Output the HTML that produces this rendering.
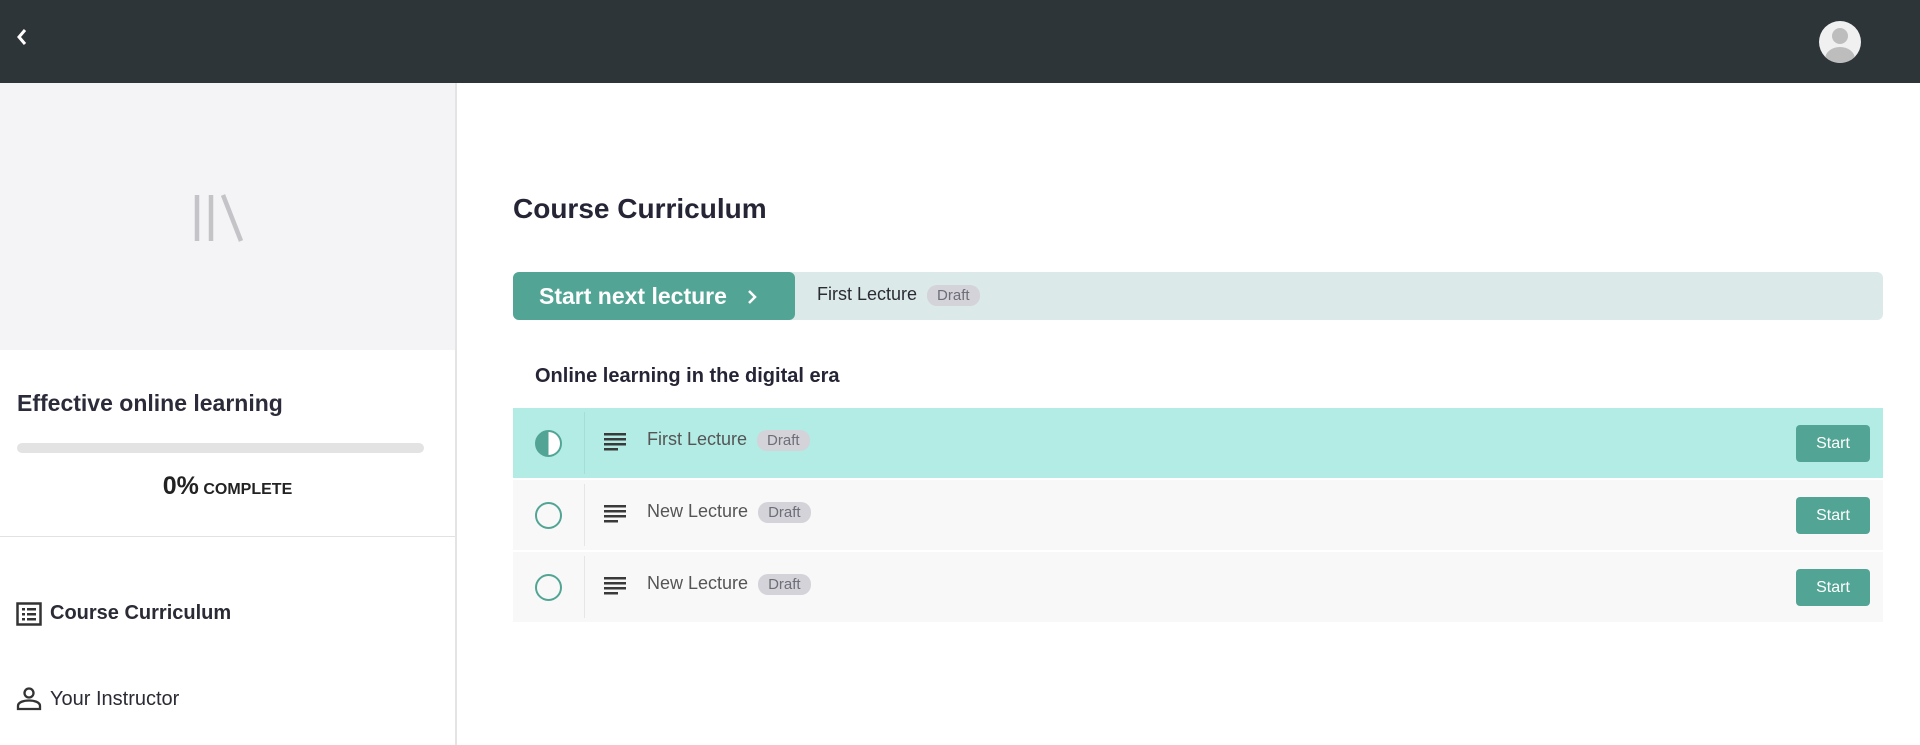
<!DOCTYPE html>
<html><head><style>
*{margin:0;padding:0;box-sizing:border-box}
body{width:1920px;height:745px;overflow:hidden;background:#fff;font-family:"Liberation Sans",sans-serif;position:relative;color:#2b2b35}
.hdr{position:absolute;left:0;top:0;width:1920px;height:83px;background:#2d3538}
.side{position:absolute;left:0;top:83px;width:457px;height:662px;border-right:2px solid #e4e4e4;background:#fff}
.img{position:absolute;left:0;top:0;width:455px;height:267px;background:#f4f4f6}
.abs{position:absolute}
.badge{display:inline-block;background:#d3d3d9;color:#6e6e78;border-radius:10px;font-size:15px;padding:2px 10px;margin-left:10px;vertical-align:0px}
.row{position:absolute;left:513px;width:1370px;height:70px;background:#f8f8f8}
.row .c{position:absolute;left:22px;top:22px;width:27px;height:27px;border:2.5px solid #52a595;border-radius:50%}
.row .v{position:absolute;left:71px;top:4px;width:1px;height:62px;background:#e6e6e6}
.row .t{position:absolute;left:134px;top:21px;font-size:18px;color:#555}
.row .b{position:absolute;left:1283px;top:17px;width:74px;height:37px;background:#52a595;color:#fff;border-radius:4px;font-size:16px;text-align:center;line-height:37px}
.row svg{position:absolute;left:91px;top:25px}
</style></head><body>
<div class="hdr">
<svg class="abs" style="left:13px;top:27px" width="18" height="20" viewBox="0 0 18 20"><path d="M12 3 L6 10 L12 17" stroke="#fff" stroke-width="3" fill="none"/></svg>
<div class="abs" style="left:1819px;top:21px;width:42px;height:42px;border-radius:50%;background:#f0f0f0;overflow:hidden">
<div class="abs" style="left:13px;top:7px;width:16px;height:16px;border-radius:50%;background:#bdbdbd"></div>
<div class="abs" style="left:6px;top:26px;width:30px;height:24px;border-radius:50%;background:#bdbdbd"></div></div>
</div>
<div class="side">
<div class="img">
<svg class="abs" style="left:194px;top:110px" width="52" height="50" viewBox="0 0 52 50"><g stroke="#c4c4c8" stroke-width="4.5"><path d="M3 2V48M17 2V48M29 2L47 48"/></g></svg>
</div>
<div class="abs" style="left:17px;top:307px;font-size:23px;font-weight:bold;color:#2b2b3a">Effective online learning</div>
<div class="abs" style="left:17px;top:360px;width:407px;height:10px;border-radius:5px;background:#e3e3e3"></div>
<div class="abs" style="left:0;top:389px;width:455px;text-align:center;color:#222"><span style="font-size:25px;font-weight:bold">0%</span> <span style="font-size:16px;font-weight:bold">COMPLETE</span></div>
<div class="abs" style="left:0;top:453px;width:455px;height:1px;background:#e2e2e2"></div>
<svg class="abs" style="left:16px;top:519px" width="26" height="24" viewBox="0 0 26 24"><rect x="1.5" y="1.5" width="23" height="21" fill="none" stroke="#333" stroke-width="2.5"/><g fill="#333"><rect x="6" y="6" width="3" height="2.5"/><rect x="6" y="11" width="3" height="2.5"/><rect x="6" y="16" width="3" height="2.5"/><rect x="11" y="6" width="9" height="2.5"/><rect x="11" y="11" width="9" height="2.5"/><rect x="11" y="16" width="9" height="2.5"/></g></svg>
<div class="abs" style="left:50px;top:519px;font-size:20px;font-weight:bold;color:#2b2b35">Course Curriculum</div>
<svg class="abs" style="left:16px;top:604px" width="26" height="24" viewBox="0 0 26 24"><circle cx="13" cy="6" r="4.5" fill="none" stroke="#333" stroke-width="2.3"/><path d="M2 22V19C2 15 8 13.5 13 13.5S24 15 24 19V22Z" fill="none" stroke="#333" stroke-width="2.3"/></svg>
<div class="abs" style="left:50px;top:605px;font-size:20px;color:#2b2b35">Your Instructor</div>
</div>
<div class="abs" style="left:513px;top:193px;font-size:28px;font-weight:bold;color:#252536">Course Curriculum</div>
<div class="abs" style="left:513px;top:272px;width:1370px;height:48px;background:#dce9e9;border-radius:6px"></div>
<div class="abs" style="left:513px;top:272px;width:282px;height:48px;background:#52a595;border-radius:6px;color:#fff;font-size:23px;font-weight:bold;line-height:48px;padding-left:26px">Start next lecture</div>
<svg class="abs" style="left:745px;top:288px" width="14" height="18" viewBox="0 0 14 18"><path d="M4 3L10 9L4 15" stroke="#fff" stroke-width="2.5" fill="none"/></svg>
<div class="abs" style="left:817px;top:284px;font-size:18px;color:#2b2b35">First Lecture<span class="badge">Draft</span></div>
<div class="abs" style="left:535px;top:365px;font-size:20px;font-weight:bold;color:#252536">Online learning in the digital era</div>
<div class="row" style="top:408px;background:#b3ebe5"><div class="c" style="background:linear-gradient(90deg,#52a595 50%,#fff 50%)"></div><div class="v" style="background:#a5ddd7"></div>
<svg width="24" height="20" viewBox="0 0 24 20"><g fill="#3a3a3a"><rect y="0" width="22" height="2.5"/><rect y="5" width="22" height="2.5"/><rect y="10" width="22" height="2.5"/><rect y="15" width="14" height="2.5"/></g></svg>
<div class="t">First Lecture<span class="badge">Draft</span></div><div class="b">Start</div></div>
<div class="row" style="top:480px"><div class="c"></div><div class="v"></div>
<svg width="24" height="20" viewBox="0 0 24 20"><g fill="#3a3a3a"><rect y="0" width="22" height="2.5"/><rect y="5" width="22" height="2.5"/><rect y="10" width="22" height="2.5"/><rect y="15" width="14" height="2.5"/></g></svg>
<div class="t">New Lecture<span class="badge">Draft</span></div><div class="b">Start</div></div>
<div class="row" style="top:552px"><div class="c"></div><div class="v"></div>
<svg width="24" height="20" viewBox="0 0 24 20"><g fill="#3a3a3a"><rect y="0" width="22" height="2.5"/><rect y="5" width="22" height="2.5"/><rect y="10" width="22" height="2.5"/><rect y="15" width="14" height="2.5"/></g></svg>
<div class="t">New Lecture<span class="badge">Draft</span></div><div class="b">Start</div></div>
</body></html>
